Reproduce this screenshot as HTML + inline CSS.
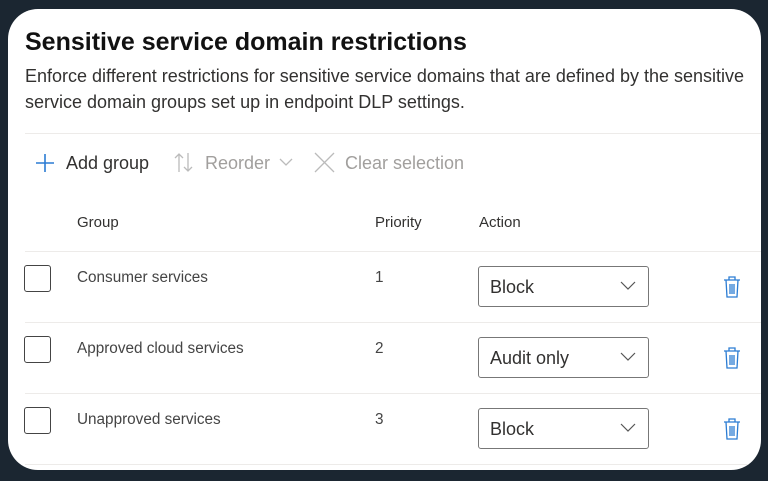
<!DOCTYPE html>
<html><head><style>
*{margin:0;padding:0;box-sizing:border-box}
body{width:768px;height:481px;background:#1b2631;font-family:"Liberation Sans",sans-serif;position:relative;overflow:hidden}
.card{position:absolute;left:8px;top:9px;width:753px;height:461px;background:#fff;border-radius:30px;overflow:hidden}
.a{position:absolute;white-space:nowrap}
.h1{left:17px;top:19px;font-size:25px;font-weight:bold;color:#111}
.d{left:17px;font-size:18px;color:#323130}
.line{position:absolute;left:17px;right:0;height:1px;background:#edebe9}
.tb{font-size:18px;top:144px}
.hd{font-size:15px;color:#323130;top:205px}
.rt{font-size:15.3px;color:#444}
.cb{position:absolute;left:16px;width:27px;height:27px;border:1.5px solid #444;border-radius:3px}
.dd{position:absolute;left:470px;width:171px;height:41px;border:1.5px solid #777;border-radius:3px;font-size:18px;color:#323130;padding:10px 0 0 11px}
.dd svg{position:absolute;right:12px;top:14px}
.tr{position:absolute;left:715px}
</style></head><body>
<div class="card">
<div class="a h1">Sensitive service domain restrictions</div>
<div class="a d" style="top:57px">Enforce different restrictions for sensitive service domains that are defined by the sensitive</div>
<div class="a d" style="top:83px">service domain groups set up in endpoint DLP settings.</div>
<div class="line" style="top:124px"></div>
<svg class="a" style="left:27px;top:144px" width="20" height="20"><path d="M10 1v18M1 10h18" stroke="#2b7cd3" stroke-width="1.6"/></svg>
<div class="a tb" style="left:58px;color:#323130">Add group</div>
<svg class="a" style="left:165px;top:143px" width="22" height="21"><path d="M6 20V2M2 6l4-4 4 4M15 1v18M11 15l4 4 4-4" stroke="#bbb" stroke-width="1.3" fill="none"/></svg>
<div class="a tb" style="left:197px;color:#a19f9d">Reorder</div>
<svg class="a" style="left:271px;top:148px" width="14" height="10"><path d="M1 2l6 6 6-6" stroke="#bbb" stroke-width="1.3" fill="none"/></svg>
<svg class="a" style="left:306px;top:143px" width="21" height="21"><path d="M1 1l19 19M20 1L1 20" stroke="#bbb" stroke-width="1.3"/></svg>
<div class="a tb" style="left:337px;color:#a19f9d">Clear selection</div>
<div class="a hd" style="left:69px">Group</div>
<div class="a hd" style="left:367px">Priority</div>
<div class="a hd" style="left:471px">Action</div>
<div class="line" style="top:242px"></div>
<div class="line" style="top:313px"></div>
<div class="line" style="top:384px"></div>
<div class="line" style="top:455px"></div>

<div class="cb" style="top:256px"></div>
<div class="a rt" style="left:69px;top:260px">Consumer services</div>
<div class="a rt" style="left:367px;top:260px">1</div>
<div class="dd" style="top:257px">Block<svg width="16" height="10"><path d="M1 1l7 7 7-7" stroke="#555" stroke-width="1.2" fill="none"/></svg></div>

<div class="cb" style="top:327px"></div>
<div class="a rt" style="left:69px;top:331px">Approved cloud services</div>
<div class="a rt" style="left:367px;top:331px">2</div>
<div class="dd" style="top:328px">Audit only<svg width="16" height="10"><path d="M1 1l7 7 7-7" stroke="#555" stroke-width="1.2" fill="none"/></svg></div>

<div class="cb" style="top:398px"></div>
<div class="a rt" style="left:69px;top:402px">Unapproved services</div>
<div class="a rt" style="left:367px;top:402px">3</div>
<div class="dd" style="top:399px">Block<svg width="16" height="10"><path d="M1 1l7 7 7-7" stroke="#555" stroke-width="1.2" fill="none"/></svg></div>

<svg class="tr" style="top:267px" width="18" height="22"><g stroke="#2b7cd3" stroke-width="1.3" fill="none"><path d="M1 4h16M6 4V1h6v3M3 4l1 17h10l1-17M7 8v10M9 8v10M11 8v10"/></g></svg>
<svg class="tr" style="top:338px" width="18" height="22"><g stroke="#2b7cd3" stroke-width="1.3" fill="none"><path d="M1 4h16M6 4V1h6v3M3 4l1 17h10l1-17M7 8v10M9 8v10M11 8v10"/></g></svg>
<svg class="tr" style="top:409px" width="18" height="22"><g stroke="#2b7cd3" stroke-width="1.3" fill="none"><path d="M1 4h16M6 4V1h6v3M3 4l1 17h10l1-17M7 8v10M9 8v10M11 8v10"/></g></svg>
</div>
</body></html>
